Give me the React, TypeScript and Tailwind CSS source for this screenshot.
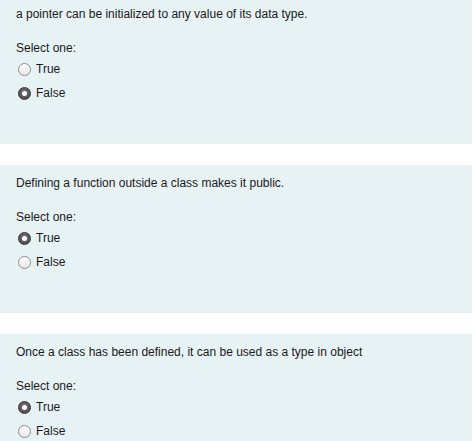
import React from 'react';

type Question = {
  text: string;
  answer: 'True' | 'False';
};

const questions: Question[] = [
  { text: 'a pointer can be initialized to any value of its data type.', answer: 'False' },
  { text: 'Defining a function outside a class makes it public.', answer: 'True' },
  { text: 'Once a class has been defined, it can be used as a type in object', answer: 'True' },
];

const Radio: React.FC<{ checked: boolean }> = ({ checked }) =>
  checked ? (
    <span className="w-[13px] h-[13px] rounded-full bg-[radial-gradient(circle_at_50%_40%,#7a7a7a,#3e3e3e)] border border-[#333] flex items-center justify-center shrink-0">
      <span className="w-[5px] h-[5px] rounded-full bg-white" />
    </span>
  ) : (
    <span className="w-[13px] h-[13px] rounded-full border border-[#8d8d8d] bg-[linear-gradient(#ffffff,#e6e6e6)] shrink-0" />
  );

const QuestionCard: React.FC<{ q: Question; first?: boolean }> = ({ q, first }) => (
  <div className={`bg-[#e7f2f5] h-[148px] w-[472px] shrink-0 px-4 pt-[9px] ${first ? '-mt-1' : ''}`}>
    <p className="text-[12px] leading-[18px]">{q.text}</p>
    <p className="text-[12px] leading-[18px] mt-4">Select one:</p>
    <div className="flex flex-col gap-[6px] mt-[3px]">
      {(['True', 'False'] as const).map((opt) => (
        <label key={opt} className="flex items-center gap-[5px] pl-[2px] h-[18px] text-[12px]">
          <Radio checked={q.answer === opt} />
          <span>{opt}</span>
        </label>
      ))}
    </div>
  </div>
);

const App: React.FC = () => {
  return (
    <div className="bg-white w-[474px] h-[441px] overflow-hidden text-[#1a1a1a] font-['Liberation_Sans',Arial,sans-serif] flex flex-col gap-[21px]">
      {questions.map((q, i) => (
        <QuestionCard key={i} q={q} first={i === 0} />
      ))}
    </div>
  );
};

export default App;
